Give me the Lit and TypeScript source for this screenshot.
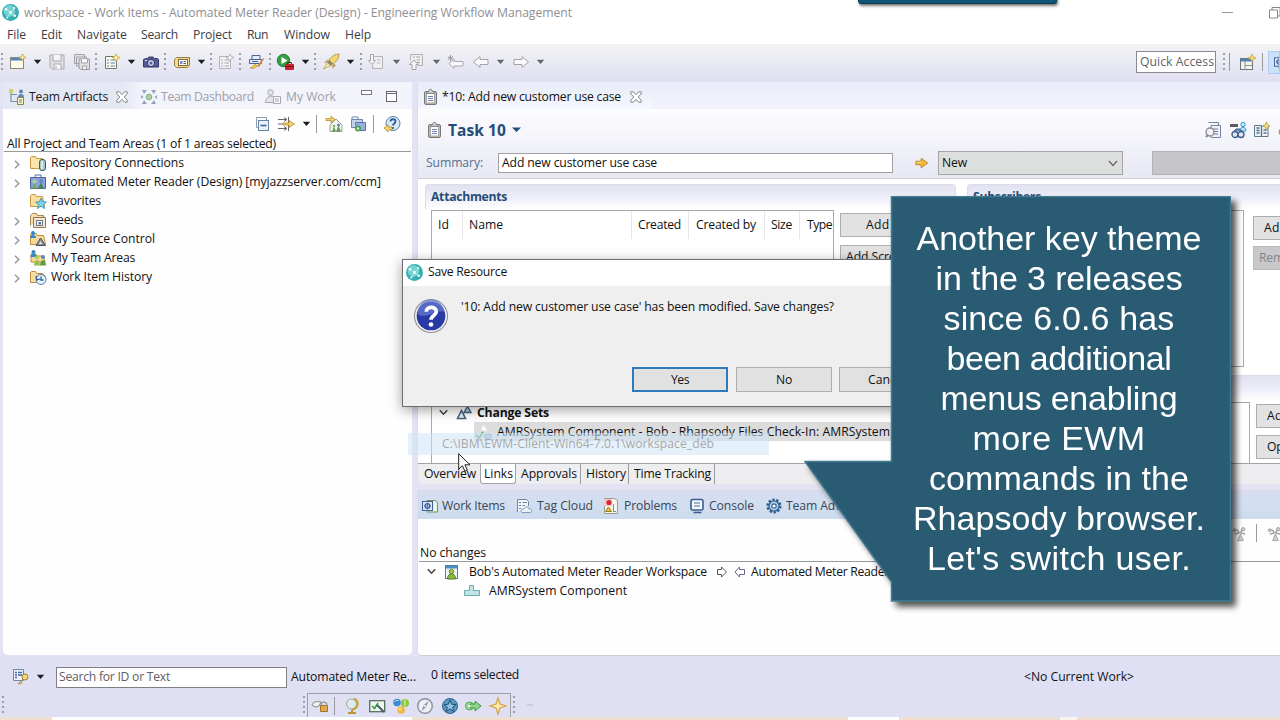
import { LitElement, html, css, svg, TemplateResult, SVGTemplateResult } from "lit";
import { customElement } from "lit/decorators.js";

const UI = '"Open Sans"';
const pen = document.createElement("canvas").getContext("2d")!;

/** A line of text set to a known width by spacing its letters. */
function label(text: string, width: number, cls = "", size = 12.2, weight = 400, family = UI) {
  pen.font = `${weight} ${size}px ${family}`;
  const ls = (width - pen.measureText(text).width) / text.length;
  return html`<span class="t ${cls}" style="letter-spacing:${ls.toFixed(3)}px">${text}</span>`;
}

type Cell = [x: number, w: number, content: unknown];

/** Lays cells out one after the other, each starting at its own x. */
function strip(origin: number, cells: Cell[]) {
  let end = origin;
  return cells.map(([x, w, c]) => {
    const m = x - end;
    end = x + w;
    return html`<div class="cell" style="margin-left:${m}px;width:${w}px">${c}</div>`;
  });
}

const G: Record<string, SVGTemplateResult> = {
  globe: svg`<circle cx="8" cy="8" r="8" fill="#35adb2"/><circle cx="7" cy="6.500" r="5.500" fill="#74d2d0"/><path d="M4 5l4 3 4-4M8 8l-3 5M8 8l4 3" stroke="#b4ecea" stroke-width=".8" fill="none"/><g fill="#f2ffff"><circle cx="3.800" cy="5" r="1.200"/><circle cx="11.500" cy="3.800" r="1"/><circle cx="8" cy="8" r="1.400"/><circle cx="5" cy="12.700" r="1"/><circle cx="12" cy="11" r="1.200"/></g>`,
  win: svg`<rect x=".5" y="3.500" width="13" height="11" fill="#fdfbe8" stroke="#8a8a78"/><rect x="1" y="4" width="12" height="2.500" fill="#4f86c0"/><path d="M12.500 0v7M9 3.500h7" stroke="#d9a53c" stroke-width="2"/><path d="M12.500 1.500v4M10.500 3.500h4" stroke="#fff3b8"/>`,
  save: svg`<path d="M1 1h14v14H3l-2-2z" fill="#e0e0e4" stroke="#a9a9ae"/><path d="M4 1v6h8V1M5 15v-5h7v5M7 12v3" fill="#f6f6f8" stroke="#a9a9ae"/>`,
  saveall: svg`<path d="M.5.500h10v9h-10zM2.500 3h10v9h-10z" fill="#e2e2e6" stroke="#a2a2a8"/><path d="M5 5h10.500v10.500H6.500L5 14z" fill="#e0e0e4" stroke="#9a9aa0"/><path d="M7.500 5v4h6V5M8.500 15v-3h4v3" fill="#f6f6f8" stroke="#a2a2a8"/>`,
  doc: svg`<path d="M1.500 2.500h11v12h-11z" fill="#fbfbf0" stroke="#77766b"/><path d="M3 6h2m1.500 0H11M3 9h2m1.500 0H11M3 12h2m1.500 0H11" stroke="#5d7fa8"/><path d="M12 0l1.200 2.500L16 3.500l-2.800 1.200L12 7.500l-1.200-2.800L8 3.500l2.800-1z" fill="#fff6ae" stroke="#cba83a" stroke-width=".9"/>`,
  docg: svg`<path d="M1.500 2.500h11v12h-11z" fill="#f2f2f5" stroke="#b4b4b8"/><path d="M3 6h2m1.500 0H11M3 9h2m1.500 0H11M3 12h2m1.500 0H11" stroke="#a8a8ae"/><path d="M12 0l1.200 2.500L16 3.500l-2.800 1.200L12 7.500l-1.200-2.800L8 3.500l2.800-1z" fill="#fff" stroke="#ababb0" stroke-width=".9"/>`,
  camera: svg`<path d="M.5 5.500l2-1h2L6 3h4l1.500 1.500h3l1 1V13H.5z" fill="#565c94" stroke="#35356a"/><circle cx="8" cy="9" r="3.600" fill="#c9d2ee" stroke="#32325e"/><circle cx="8" cy="9" r="1.500" fill="#55609a"/><path d="M2 6.500h2" stroke="#ddd"/>`,
  card: svg`<path d="M2.500 3.500h13v8l-2 2h-11l-2-2v-6z" fill="#f2dc94" stroke="#9a7c3a"/><rect x="4.500" y="5.500" width="9" height="6" fill="#fff" stroke="#7b6b3c"/><path d="M9.500 7.500H12M9.500 9.500H12" stroke="#555"/><rect x="6" y="7" width="2.500" height="3" fill="#7a8fb4"/>`,
  brush: svg`<path d="M4 1.500h8v4H4zM1.500 5.500h12v4h-12z" fill="#e4eafa" stroke="#4d628f"/><path d="M4 7.500h6" stroke="#3f64a8"/><path d="M2 14c3 0 3-3 5-4l2 2c-1 2-4 3-7 2z" fill="#f3cb45" stroke="#a8862d" stroke-width=".6"/><path d="M9 12l6-8 1 1-5 8z" fill="#c98c3c"/>`,
  run: svg`<circle cx="6.500" cy="6.500" r="6.200" fill="#37a046" stroke="#1e7a30"/><path d="M4.500 3v7l6-3.500z" fill="#fff"/><rect x="8" y="10" width="9" height="6" rx="1" fill="#c9202e"/><path d="M10.500 10V8.500h4V10M8 12.500h9" stroke="#7d1019" fill="none"/>`,
  rocket: svg`<path d="M17 0c-4 0-7 2-10 6l4 4c4-3 6-6 6-10z" fill="#f7d66e" stroke="#a08339" stroke-width=".8"/><path d="M7 6l4 4-2 2-4-4z" fill="#8a8576"/><path d="M5.500 8.500l3 3-7 3.500z" fill="#f9e59a" stroke="#b08a38" stroke-width=".6"/><path d="M6 5L2 9l3-.5M11 10l-1 5 4-4" fill="#c58e3e"/>`,
  down: svg`<path d="M6.500 2.500h8v12h-10V11" fill="#efeff2" stroke="#b4b4b6"/><path d="M2.500.500h3v6h2L4 10.500.500 6.500h2z" fill="#f6f6f6" stroke="#a4a4a6"/><path d="M9 6h3M9 9h3" stroke="#bbb"/>`,
  up: svg`<path d="M2.500 6V.500h12v11H10" fill="#efeff2" stroke="#b0b0b2"/><path d="M5 3h2m1 0h4M9 6h3M9 8.500h3" stroke="#a8a8aa"/><path d="M4 15.500v-5H1.500L6 6l4.500 4.500H8v5z" fill="#f6f6f6" stroke="#a4a4a6"/>`,
  backstar: svg`<path d="M2 9.500l5-4.500v2.500h9V12H7v2.500z" fill="#f8f8fa" stroke="#a8a8ac"/><path d="M3.500 1v6M.8 2.500l5.400 3M.8 5.500l5.400-3" stroke="#9a9a9e"/>`,
  back: svg`<path d="M.5 8L7 2.500v3h8v5H7v3z" fill="#fafafc" stroke="#a2a2a6"/>`,
  fwd: svg`<path d="M15.500 8L9 2.500v3H1v5h8v3z" fill="#fafafc" stroke="#a2a2a6"/>`,
  persp: svg`<rect x="1.500" y="4.500" width="12" height="11" fill="#f4f4e8" stroke="#6d7680"/><rect x="2" y="5" width="11" height="2.500" fill="#4f86b8"/><path d="M6 7v8.500M6 11.500h7" stroke="#8a949c"/><path d="M13 0l1.200 2.800L17 4l-2.800 1.200L13 8l-1.200-2.800L9 4l2.800-1.200z" fill="#f6d878" stroke="#c39a3a" stroke-width=".7"/>`,
  artifacts: svg`<path d="M2 2v10.500h7M2 5.500h6" stroke="#7a93ae" fill="none" stroke-width="1.200"/><path d="M0 0h4v4H0z" fill="#cbd66a"/><circle cx="12" cy="2.500" r="2" fill="#5f83b8"/><path d="M9 8c0-4 6-4 6 0z" fill="#5f83b8"/><path d="M8.500 8.500h6v7h-6z" fill="#fbf6c8" stroke="#8a8250"/><path d="M10 11h3M10 13h3" stroke="#8a8250"/>`,
  dash: svg`<circle cx="8" cy="8" r="2.800" fill="#a8cfa0" stroke="#86b07f"/><g fill="#96a3b4"><path d="M1 1h5L3 5zM15 1h-5l3 4zM1 15h5l-3-4zM15 15h-5l3-4zM0 6l2.500 2L0 10zM16 6l-2.500 2 2.500 2z"/></g>`,
  person: svg`<circle cx="5.500" cy="3.500" r="2.800" fill="#e4e4ea" stroke="#a8a8b4"/><path d="M.5 13.500C.5 6 9 6 9 9v4.500z" fill="#e4e4ea" stroke="#a8a8b4"/><path d="M8.500 7.500h7v7h-7z" fill="#f8f8fa" stroke="#a8a8b4"/><path d="M10 10h4M10 12h4" stroke="#a8a8b4"/>`,
  collapse: svg`<path d="M1.500 1.500h10v3M1.500 1.500v10h2" fill="none" stroke="#8b9bb0"/><rect x="3.500" y="4.500" width="10" height="10" fill="#e9f1fb" stroke="#6782a5"/><path d="M5.500 9.500h6" stroke="#2f5c98" stroke-width="1.500"/>`,
  filter: svg`<path d="M0 3.500h8M0 12.500h8M0 8h5" stroke="#666"/><path d="M6 1.500l3 2-3 2M6 10.500l3 2-3 2M10.500 1v14" stroke="#666" fill="none"/><path d="M5 7h6V4.500L16.500 8 11 11.500V9H5z" fill="#f5d271" stroke="#b98c2b" stroke-width=".8"/>`,
  home: svg`<path d="M4 9l6-6 6 6v6.500H4z" fill="#f8f4ee" stroke="#9a9488" stroke-width=".9"/><path d="M0 2.500h5V0l4 3.500L5 7V4.500H0z" fill="#f3d06a" stroke="#a8842c" stroke-width=".7"/><path d="M6 15.500l2-5 2 5zM10 15.500l2.500-6 2.500 6z" fill="#5f9a56"/><circle cx="8" cy="10" r="1.300" fill="#7cb568"/><circle cx="12.500" cy="9" r="1.500" fill="#5c84ba"/>`,
  area: svg`<path d="M1.500 3.500h11v8h-11z" fill="#c2d2ea" stroke="#6d86b2"/><path d="M2 1h6v2.500H2z" fill="none" stroke="#6d86b2"/><path d="M5.500 6.500h10v8h-9z" fill="#98b2de" stroke="#5673a6"/><circle cx="8" cy="12.500" r="3" fill="#4aa05a"/><circle cx="8" cy="12.500" r="1.300" fill="#d8f0da"/>`,
  help: svg`<circle cx="9" cy="7.500" r="7" fill="#dce9f7" stroke="#557fae"/><path d="M6.500 5.500C6.500 2.500 11.500 2.500 11.500 5.500c0 2-2.500 2-2.500 4M9 11v2" fill="none" stroke="#2d5f9b" stroke-width="1.800"/><path d="M0 12l4-3.500V11h4v3H4v2z" fill="#f7d46c" stroke="#a8842c" stroke-width=".7"/>`,
  f0: svg`<path d="M.5 13.500v-11l1-1h4l1 2h6v10z" fill="#f9e5ac" stroke="#c69a45"/><rect x="9.500" y="4.500" width="6" height="11" rx="2.500" fill="#a9c6cc" stroke="#34616c"/><path d="M12 6v8" stroke="#e8f6f8" stroke-width="1.500"/>`,
  f1: svg`<path d="M5 3V1h6v2" fill="none" stroke="#5a6fa8"/><path d="M.5 3.500h15v11H.5z" fill="#8ba3d8" stroke="#4d62a0"/><path d="M2 14.500l2.500-6 2.500 6z" fill="#6dae5c"/><circle cx="4.500" cy="7.500" r="2" fill="#a7d58e"/><path d="M8 14.500l3-6 3 6z" fill="#3d8a46"/><circle cx="11" cy="7" r="2" fill="#5e86cc"/>`,
  f2: svg`<path d="M.5 13.500v-11l1-1h4l1 2h6l2 10z" fill="#f9e0a0" stroke="#c69a45"/><path d="M11 5l1.600 3.700 3.900.3-3 2.500 1 4-3.500-2.200-3.500 2.200 1-4-3-2.500 3.900-.3z" fill="#7fd3e6" stroke="#2d8fb5" stroke-width=".8"/>`,
  f3: svg`<path d="M.5 13.500v-10l2-2h4l1 2h6v2" fill="#f6ddb0" stroke="#a88652"/><path d="M3.500 5.500h12v10h-12z" fill="#f0e7d8" stroke="#96774c"/><rect x="6.500" y="8.500" width="6" height="5" fill="#fff" stroke="#777"/><rect x="8.500" y="10" width="2.500" height="2.500" fill="#4a71ad"/>`,
  f4: svg`<path d="M.5 13.500v-10l1-1h5l1 2h6l2 9z" fill="#f7d898" stroke="#c08f3c"/><circle cx="3" cy="2" r="2" fill="#2f86c6"/><path d="M0 7c0-4 6-4 6 0z" fill="#2f86c6"/><path d="M6 14.500L10.500 7l5 7.500z" fill="#8a8f9c" stroke="#4d525e"/><path d="M9 13l1.500-3 1.500 3z" fill="#eee"/>`,
  f5: svg`<path d="M1 12V4h5l1 2h6l2 6z" fill="#f7d898" stroke="#c08f3c"/><circle cx="3.500" cy="2" r="2" fill="#2f86c6"/><path d="M.5 7c0-4 6-4 6 0z" fill="#2f86c6"/><path d="M4 15.500c0-7 6-7 6 0z" fill="#93c04a"/><circle cx="7" cy="7.500" r="2" fill="#a8cf62"/><path d="M10 15.500c0-7 6-7 6 0z" fill="#62993a"/><circle cx="13" cy="7" r="2" fill="#5b85c0"/>`,
  f6: svg`<path d="M.5 13.500v-10l1-1h4l1 2h6l3 3-4 6z" fill="#f7dea0" stroke="#b98b3a"/><circle cx="11" cy="10.500" r="5" fill="#e6f1fa" stroke="#4a7dad"/><path d="M11 7.500v3.500h2.500M6 7l1 4 3-1" stroke="#2f5f98" fill="none" stroke-width="1.300"/>`,
  clip: svg`<rect x="1.500" y="2.500" width="12" height="13" rx="1.500" fill="#d3bc98" stroke="#77777c"/><rect x="3.500" y="4.500" width="8" height="9.500" fill="#fff" stroke="#9a9a9e" stroke-width=".8"/><path d="M5 7.500h5M5 9.500h5M5 11.500h5" stroke="#6c7fb0"/><path d="M4 2.500h1.500c0-3 4-3 4 0H11v2H4z" fill="#c8c8cc" stroke="#77777c" stroke-width=".8"/>`,
  h0: svg`<path d="M3.500.500h10v3M6 3.500h9.500v12H6z" fill="#edf0f8" stroke="#7686a6"/><path d="M8 7h5M8 9.500h5M8 12h5" stroke="#6e7ea0"/><circle cx="5" cy="10" r="4" fill="#f3f3f5" stroke="#8a8a90" stroke-width="1.300"/><path d="M3 13l-2 2" stroke="#8a8a90" stroke-width="2"/>`,
  h1: svg`<path d="M0 3.500h8" stroke="#5c5c66" stroke-width="3"/><circle cx="13" cy="2.500" r="2.200" fill="#bfe6fa" stroke="#3b9ad0"/><path d="M10 9c0-5 6-5 6 0z" fill="#bfe6fa" stroke="#3b9ad0"/><circle cx="5" cy="12.500" r="3" fill="#dbe5f2" stroke="#3b5b88" stroke-width="1.300"/><circle cx="11" cy="12.500" r="3" fill="#dbe5f2" stroke="#3b5b88" stroke-width="1.300"/><path d="M4 9l2-2h4l2 2" fill="#6b8cb8" stroke="#3b5b88"/>`,
  h2: svg`<path d="M.5 3.500h7l1 1 1-1H14v11H.5z" fill="#f0f3f6" stroke="#5e7a8c"/><path d="M2.500 6h3M2.500 8.500h3M2.500 11h3M9.500 8h3M9.500 11h3M7.500 4v10" stroke="#4c7494" stroke-width="1.300"/><path d="M12.500 0l1.200 2.800L16 4l-2.300 1.200L12.500 8l-1.200-2.800L9 4l2.300-1.200z" fill="#f6e178" stroke="#ab8a2a" stroke-width=".7"/>`,
  arrowr: svg`<path d="M1 5.500h6V2l7.500 5.500L7 13V9.500H1z" fill="#f2b63a" stroke="#b98422"/><path d="M2 6.800h6" stroke="#fde6a0"/>`,
  question: svg`<circle cx="16" cy="16" r="15.500" fill="#f4f4f6" stroke="#8e8e94"/><circle cx="16" cy="16" r="13.500" fill="#2a3aa4"/><path d="M3.500 14A12.500 12.500 0 0 1 28.500 12C22 9 10 20 3.500 14z" fill="#6479d0" opacity=".75"/><path d="M11.500 12C11.500 6.500 21 6.500 21 12c0 3.500-5 3.500-5 7.500" fill="none" stroke="#fff" stroke-width="3.400"/><circle cx="16" cy="24" r="2.200" fill="#fff"/>`,
  change: svg`<path d="M1.500 13.500l4-8 4 8z" fill="#e7edf4" stroke="#456184" stroke-width="1.600"/><path d="M8 7.500l3.500-6 3.500 6z" fill="#b5c4da" stroke="#456184" stroke-width="1.400"/>`,
  check: svg`<path d="M0 11l3 3 4-6" fill="none" stroke="#5fa56c" stroke-width="1.500"/><path d="M5 6l3-5 3 6" fill="#fff" stroke="#eeeef0"/><path d="M9 10.500h6v3.500H9z" fill="#b6cce8" stroke="#7f9cc8"/>`,
  wi: svg`<path d="M5 2.500h8l2.500 2V14H5z" fill="#eef4e0" stroke="#6f9460"/><rect x=".5" y="3.500" width="10" height="9" fill="#dde8f8" stroke="#3d5f98"/><circle cx="5.500" cy="8" r="2.400" fill="none" stroke="#3d5f98" stroke-width="1.300"/><path d="M5.500 4.500v7M2 8h7" stroke="#3d5f98" stroke-width=".7"/>`,
  tag: svg`<path d="M1.500 14V1.500h9l2 2V8" fill="#f4f6fa" stroke="#6e85a8"/><path d="M3 4.500h2M6.500 4.500H11M3 7.500h2M6.500 7.500H9M3 10.500h2" stroke="#6e85a8"/><path d="M6 14.500c-2-2 0-4 2-3.500 1-3 5-2.500 5 0 3 0 3.500 3 1.500 3.500z" fill="#eaf2fc" stroke="#7c9cc4"/>`,
  prob: svg`<path d="M1.500.500h10l3 2v13h-13z" fill="#f7f5ee" stroke="#9a9a90"/><rect x="1" y="1" width="8" height="7" fill="#f3c7cb"/><circle cx="6" cy="4.500" r="2.600" fill="#d42a36"/><path d="M2.500 13.500L5.500 9l3 4.500z" fill="#eec137" stroke="#9a7a1c"/><path d="M10.500 6v7M13 13.500h-3" stroke="#888"/>`,
  cons: svg`<rect x="1" y="1.500" width="12" height="10.500" rx="1.500" fill="#f4f8fd" stroke="#3a5d92" stroke-width="1.600"/><path d="M4 5h6M4 8h6" stroke="#4a6ea6" stroke-width="1.200"/><path d="M3.500 14.500h8" stroke="#3a5d92" stroke-width="1.600"/>`,
  gear: svg`<circle cx="8" cy="8" r="6.300" fill="#a9c6e6" stroke="#33608f" stroke-width="2.600" stroke-dasharray="2.300 1.600"/><circle cx="8" cy="8" r="5" fill="#b9d2ec" stroke="#33608f" stroke-width="1.200"/><circle cx="8" cy="8" r="2.200" fill="#fff" stroke="#33608f" stroke-width="1.200"/>`,
  space: svg`<rect x="1.500" y="1.500" width="12" height="13" fill="#edf3fb" stroke="#55809e"/><rect x="2" y="2" width="11" height="2.500" fill="#4a8fc4"/><circle cx="7.500" cy="7.500" r="2.200" fill="#a8c948" stroke="#5e8a26"/><path d="M3.500 15c0-7 8-7 8 0z" fill="#8dba3c" stroke="#4f7d22"/>`,
  comp: svg`<path d="M5.500 2.500h4v5h6v5H.5v-5h5z" fill="#bfe5e2" stroke="#69aeb0"/>`,
  oright: svg`<path d="M1.500 3.500h4V1l5 5-5 5V8.500h-4z" fill="#fff" stroke="#555"/>`,
  oleft: svg`<path d="M10.500 3.500h-5V1l-4.500 5 4.500 5V8.500h5z" fill="#fff" stroke="#666688"/>`,
  listkey: svg`<path d="M.5.500h10v11H.5z" fill="#eef3fb" stroke="#7187ac"/><path d="M2 3.500h2M5 3.500h4M2 6h2M5 6h4M2 8.500h2" stroke="#4668a4" stroke-width="1.300"/><circle cx="12" cy="8" r="3" fill="#f2d77c" stroke="#9d803a"/><path d="M10 10l-5 5 2-.5 1 .5 1-3z" fill="#f2d77c" stroke="#9d803a" stroke-width=".7"/>`,
  b0: svg`<path d="M0 7c1-3 4-4 9-3l-2 4-4 1z" fill="#f2f2f2" stroke="#888"/><path d="M8.500 7.500h7v6h-7z" fill="#e2a93e" stroke="#9a7630"/><path d="M9 7c0-4 6-4 6 1" fill="none" stroke="#999" stroke-width="1.500"/>`,
  b1: svg`<circle cx="7.500" cy="6" r="5" fill="#d9ecf4" stroke="#a4a48c"/><path d="M10 .5c6 3 4 10-2 11.500" fill="none" stroke="#c9a43c" stroke-width="2"/><path d="M4 15h8M8 12v3" stroke="#b5993a" stroke-width="2"/>`,
  b2: svg`<rect x=".7" y="2.700" width="15" height="11" fill="#f2f8f0" stroke="#4f6f5e" stroke-width="1.300"/><path d="M3 8l2.500 2.500L9 5" fill="none" stroke="#2d9a50" stroke-width="1.500"/><path d="M8 7l7 7" stroke="#4a5a66" stroke-width="2"/>`,
  b3: svg`<circle cx="4" cy="4.500" r="3.800" fill="#3c8ad0"/><path d="M1.500 4a3 3 0 0 1 4-1.500" stroke="#cde6fb" fill="none"/><circle cx="12" cy="5" r="4" fill="#8ac640"/><path d="M12 1.500v7" stroke="#e2f5c0"/><circle cx="8" cy="12" r="3.800" fill="#f0b838"/><circle cx="7" cy="11" r="1.500" fill="#fde09a"/>`,
  b4: svg`<circle cx="8" cy="8" r="7.300" fill="#eceff4" stroke="#8d8f9a" stroke-width="1.400"/><path d="M11.500 3L9 9l-4.500 4L7 7z" fill="#7b8cae"/><circle cx="8" cy="8" r="1" fill="#fff"/>`,
  b5: svg`<circle cx="8" cy="8" r="7.500" fill="#5a9ac4" stroke="#2c5f86"/><path d="M8 2l1.700 4.300 4.300.2-3.400 2.800L12 13.500 8 11l-4 2.500 1.400-4.200L2 6.500l4.300-.2z" fill="#8fc4e2" stroke="#1f4f78"/>`,
  b6: svg`<circle cx="4.500" cy="8" r="4" fill="#9fdc98" stroke="#4ea64c"/><path d="M5 6h5V3l6 5-6 5v-3H5z" fill="#8ed387" stroke="#3f9a42"/><circle cx="4.500" cy="8" r="1.300" fill="#effbee"/>`,
  b7: svg`<path d="M8 0l2 6 6 2-6 2-2 6-2-6-6-2 6-2z" fill="#fbe9ae" stroke="#d2a340" stroke-width="1.200"/>`,
  deliver: svg`<g fill="#d0d0d2" stroke="#a0a0a4"><path d="M6 15l3-7 3 7z"/><path d="M1 4h5l2 3M12 1l-3 6M9 7l5 1M3 8l5-1" fill="none" stroke-width="1.500"/><circle cx="3" cy="4" r="1.500"/><circle cx="12" cy="3" r="1.800"/></g>`,
  cursor: svg`<path d="M.7.700v15.500l3.700-3.500 2.500 5.600 2.500-1.100-2.500-5.400h5.100z" fill="#fff" stroke="#222" stroke-width="1"/>`,
};

function icon(name: string, w = 16, h = w, box = "0 0 17 16") {
  return html`<svg class="i" width=${w} height=${h} viewBox=${box}>${G[name]}</svg>`;
}
const ic = (x: number, n: string): Cell => [x, 17, icon(n, 17, 16)];
const drop = (x: number, fill = "#1d1d22"): Cell => [x - 4, 9, html`<svg class="i" width="9" height="6" viewBox="0 0 9 6"><path d="M.8.800h7.400L4.500 5z" fill=${fill}/></svg>`];
const dropg = (x: number): Cell => drop(x, "#66666e");
const grip = (x: number): Cell => [x, 2, html`<i class="grip"></i>`];
const rule = (x: number): Cell => [x, 1, html`<i class="rule"></i>`];
const chev = (open: boolean) => open
  ? html`<svg class="i" width="9" height="7" viewBox="0 0 9 7"><path d="M.8 1.200l3.700 4 3.700-4" fill="none" stroke="#444" stroke-width="1.500"/></svg>`
  : html`<svg class="i chev" width="6" height="9" viewBox="0 0 6 9"><path d="M1 .8l3.800 3.700L1 8.200" fill="none" stroke="#999" stroke-width="1.500"/></svg>`;
const close = () => html`<svg class="i" width="12" height="12" viewBox="0 0 12 12"><path d="M.8.800h2.600L6 3.700 8.600.800h2.600v2L8.200 6l3 3.200v2H8.600L6 8.300l-2.600 2.900H.8v-2l3-3.200-3-3.200z" fill="#fff" stroke="#77777d" stroke-width=".9"/></svg>`;

const TREE: [string, string, number, boolean][] = [
  ["f0", "Repository Connections", 133, true],
  ["f1", "Automated Meter Reader (Design) [myjazzserver.com/ccm]", 330, true],
  ["f2", "Favorites", 50, false],
  ["f3", "Feeds", 32, true],
  ["f4", "My Source Control", 104, true],
  ["f5", "My Team Areas", 84, true],
  ["f6", "Work Item History", 101, true],
];

const NOTE: [string, number][] = [
  ["Another key theme", 285], ["in the 3 releases", 247], ["since 6.0.6 has", 231],
  ["been additional", 225], ["menus enabling", 237], ["more EWM", 173],
  ["commands in the", 260], ["Rhapsody browser.", 292], ["Let's switch user.", 264],
];

@customElement("app-root")
export class AppRoot extends LitElement {
  static styles = css`
    :host { display: block; position: relative; width: 1280px; height: 720px; overflow: hidden; background: #e0e0f4; font: 12.2px/16px "Open Sans", sans-serif; color: #111; }
    * { box-sizing: border-box; }
    .app { display: grid; grid-template-rows: 25px 19px 38px 575px 63px; height: 720px; }
    .t { display: inline-block; white-space: pre; }
    .i { display: block; overflow: visible; flex: none; }
    .row { display: flex; align-items: center; }
    .cell { flex: none; display: flex; align-items: center; }
    .title { background: #fff; color: #8f8f93; }
    .menu { background: #fff; color: #3d3d42; }
    .tools { background: linear-gradient(#f3f3f6, #e9e9f4 50%, #dfdff1); border-top: 1px solid #f0eef0; padding-bottom: 3px; }
    .grip { display: block; width: 2px; height: 18px; background: repeating-linear-gradient(#9d9da8 0 2px, transparent 2px 5px); }
    .rule { display: block; width: 1px; height: 18px; background: #9898a0; }
    .quick { width: 80px; height: 22px; border: 1px solid #88888e; background: #fff; display: flex; align-items: center; padding-left: 3px; color: #606066; }
    .sel { width: 16px; height: 23px; background: #cce2fb; border: 1px solid #a9cdf4; display: flex; align-items: center; padding-left: 5px; overflow: hidden; }
    .main { display: grid; grid-template-columns: 409px 1fr; column-gap: 5px; padding-left: 3px; background: #e4e3f4; }
    .left { background: #fefefe; display: grid; grid-template-rows: 27px 27px 17px 1fr; height: 573px; border-radius: 0 0 5px 5px; }
    .tabs { background: linear-gradient(90deg, #e4e8f3 0 120px, #f3f3fc 138px); color: #a0a0a8; padding-top: 2px; }
    .ltools { padding-top: 2px; }
    .head { border-bottom: 1px solid #9a9a9e; margin: 0 1px; height: 16px; }
    .tree { padding-top: 0; }
    .leaf { height: 19px; }
    .chev { margin-top: 3px; }
    .right { display: grid; grid-template-rows: 408px 1fr; height: 574px; }
    .editor { display: grid; grid-template-rows: 27px 70px 284px 21px; height: 402px; background: #fff; border-radius: 0 0 6px 6px; border-left: 1px solid #dcdcf0; overflow: hidden; }
    .etabs { background: linear-gradient(#ecebf8, #edeffa 40%, #f3f2fb); padding-top: 2px; }
    .etab { display: flex; align-items: center; height: 25px; width: 232px; margin-left: 3px; background: linear-gradient(#e8ecf7, #f6f8fe); border-radius: 0 10px 0 0; }
    .form { background: linear-gradient(#fdfdff, #f0f0f8 60%, #e6e8f2); border-bottom: 1px solid #cfcfd6; }
    .trow { height: 41px; padding-top: 1px; }
    .srow { height: 26px; }
    .blue { color: #244c78; }
    .slate { color: #53708e; }
    .field { background: #fff; border: 1px solid #a0a0a6; height: 20px; display: flex; align-items: center; padding-left: 3px; width: 100%; }
    .combo { background: #dddfde; border: 1px solid #a4a4a6; height: 24px; display: flex; align-items: center; justify-content: space-between; padding: 0 4px 0 3px; width: 100%; }
    .gray { background: #c6c6c9; border: 1px solid #b4b4b7; height: 24px; width: 100%; }
    .body { display: grid; grid-template-columns: 531px 1fr; column-gap: 11px; padding: 5px 0 0 7px; overflow: hidden; }
    .sec { display: grid; grid-template-rows: 25px 166px 26px 1fr; height: 279px; }
    .bar { background: linear-gradient(#e2e2f0, #f0f0fa 60%, #fff); border: 1px solid #dcdcea; border-bottom: 0; border-radius: 4px 4px 0 0; display: flex; align-items: center; padding-left: 5px; }
    .split { display: flex; gap: 6px; align-items: flex-start; padding: 1px 0 0 6px; }
    .split.r { gap: 9px; }
    .split.r2 { gap: 6px; }
    .box { border: 1px solid #a8a8ae; background: #fff; height: 157px; flex: none; }
    .w403 { width: 403px; } .w272 { width: 271px; } .w278 { width: 277px; } .w520 { width: 520px; }
    .low { height: 62px; border-bottom: 0; }
    .cols { height: 28px; background: linear-gradient(90deg, transparent 30px, #e6e6ea 30px 31px, transparent 31px 199px, #e6e6ea 199px 200px, transparent 200px 256px, #e6e6ea 256px 257px, transparent 257px 332px, #e6e6ea 332px 333px, transparent 333px 367px, #e6e6ea 367px 368px, transparent 368px); }
    .btns { display: flex; flex-direction: column; gap: 8px; padding-top: 3px; }
    .btns.r { padding-top: 6px; gap: 6px; }
    .btns.l { padding-top: 2px; gap: 7px; }
    .btn { width: 110px; height: 24px; background: #e2e2e3; border: 1px solid #adadb0; display: flex; align-items: center; }
    .btn.off { background: #c9c9cb; border-color: #b9b9bb; color: #85858a; }
    .pad26 { padding-left: 25px; } .pad5 { padding-left: 5px; } .pad11 { padding-left: 10px; }
    .csets { height: 19px; } .picked { height: 19px; margin-left: 42px; background: #dcdcdd; }
    .pages { background: #eeeef0; border-top: 1px solid #a2a2a8; display: flex; }
    .pg { height: 20px; width: 100%; display: flex; align-items: center; border-right: 1px solid #9a9aa0; padding-left: 5px; }
    .pg.first { border-right: 0; padding-left: 6px; }
    .pg.on { background: #fff; border-radius: 0 0 3px 3px; border: 1px solid #a2a2a8; border-top: 0; padding-left: 3px; }
    .views { background: #fefefe; border-left: 1px solid #dcdcf0; display: grid; grid-template-rows: 29px 43px 19px 19px 1fr; border-bottom: 1px solid #ccccc9; border-radius: 0 0 0 5px; }
    .vtabs { background: linear-gradient(#d9dcf0, #d2dff0 45%, #cddbee); color: #3c4656; padding-top: 3px; }
    .nochg { border-bottom: 1px solid #9a9a9e; margin-left: 1px; align-items: flex-end; }
    .lift { padding-bottom: 19px; }
    .foot { display: grid; grid-template-rows: 36px 24px 3px; }
    .foot .row.a { padding-top: 4px; }
    .find { width: 231px; height: 21px; background: #fff; border: 1px solid #7f7f85; display: flex; align-items: center; padding-left: 2px; color: #606064; }
    .trim { height: 24px; width: 204px; border: 1px solid #a0a0a6; border-bottom: 0; display: flex; align-items: center; }
    .task { background: linear-gradient(90deg, #efe0d2 52px, #fff 52px 412px, #efe0d2 412px 848px, #fff 848px 899px, #efe0d2 899px 1060px, #faf4ee 1060px 1077px, #efe0d2 1077px); }
    .ghost { position: absolute; left: 408px; top: 433px; width: 361px; height: 22px; background: rgba(205, 229, 246, .55); color: rgba(150, 140, 135, .75); padding: 3px 0 0 34px; }
    .dialog { position: absolute; left: 402px; top: 259px; width: 540px; height: 148px; background: #efefef; border: 1px solid #6e6e72; box-shadow: 0 3px 12px rgba(0,0,0,.38); display: grid; grid-template-rows: 26px 80px 1fr; }
    .dt { background: #fff; padding-bottom: 2px; }
    .dm { align-items: flex-start; padding-top: 13px; }
    .dbs { padding-bottom: 13px; }
    .db { height: 25px; width: 96px; background: #e1e1e1; border: 1px solid #adadad; display: flex; align-items: center; justify-content: center; }
    .db.def { border: 2px solid #2f79bd; }
    .tip { position: absolute; left: 858px; top: -8px; width: 199px; height: 12px; background: #0d5679; border: 1px solid #0b3850; border-radius: 3px; box-shadow: 1px 2px 3px rgba(0,0,0,.55); }
    .callout { position: absolute; left: 804px; top: 196px; width: 427px; height: 406px; filter: drop-shadow(5px 5px 3px rgba(0,0,0,.68)); }
    .shape { position: absolute; left: 0; top: 0; display: block; }
    .note { position: relative; margin-left: 85px; width: 340px; padding-top: 22px; display: flex; flex-direction: column; align-items: center; color: #fff; }
    .line { height: 40px; font: 34px/40px "Liberation Sans", sans-serif; }
    .cursor { position: absolute; left: 458px; top: 453px; }
    .bold { font-weight: 700; }
    .big { font-size: 15.5px; line-height: 20px; font-weight: 700; }
    .dark { color: #1c1c20; }
    .up6 { margin-top: -8px; }
    .raise { padding-bottom: 5px; }
  `;

  private toolbar(): TemplateResult {
    return html`<div class="row tools">${strip(0, [
      grip(1), ic(10, "win"), drop(37), ic(49, "save"), ic(74, "saveall"), grip(95), ic(104, "doc"), drop(131),
      ic(143, "camera"), grip(164), ic(174, "card"), drop(201), grip(210), ic(218, "docg"), grip(239), ic(248, "brush"),
      grip(269), ic(277, "run"), drop(305), grip(314), ic(322, "rocket"), drop(350), grip(360), ic(368, "down"), dropg(396),
      ic(408, "up"), dropg(436), ic(447, "backstar"), ic(473, "back"), dropg(500), ic(513, "fwd"), dropg(540),
      [1136, 80, html`<div class="quick">${label("Quick Access", 74)}</div>`],
      grip(1223), rule(1229), ic(1239, "persp"), rule(1262), [1268, 12, html`<div class="sel">${icon("wi")}</div>`],
    ])}</div>`;
  }

  private leftPane(): TemplateResult {
    return html`<section class="left">
      <div class="row tabs">${strip(3, [
        ic(9, "artifacts"), [29, 80, label("Team Artifacts", 79, "dark")], [116, 12, close()],
        ic(141, "dash"), [161, 94, label("Team Dashboard", 93)], ic(265, "person"), [286, 52, label("My Work", 50)],
        [361, 12, html`<svg class="i up6" width="11" height="5"><rect x=".5" y=".5" width="10" height="4" fill="#fff" stroke="#77777c"/></svg>`],
        [386, 12, html`<svg class="i" width="11" height="11"><rect x=".5" y=".5" width="10" height="10" fill="#fff" stroke="#66666c"/><path d="M0 2.500h11" stroke="#66666c"/></svg>`],
      ])}</div>
      <div class="row ltools">${strip(3, [ic(255, "collapse"), ic(278, "filter"), drop(306), rule(316), ic(326, "home"), ic(350, "area"), rule(373), ic(384, "help")])}</div>
      <div class="row head">${strip(4, [[7, 270, label("All Project and Team Areas (1 of 1 areas selected)", 269)]])}</div>
      <div class="tree">${TREE.map(([g, s, w, more]) => html`<div class="row leaf">${strip(3, [
        [14, 8, more ? chev(false) : ""], ic(30, g), [51, w, label(s, w)],
      ])}</div>`)}</div>
    </section>`;
  }

  private editor(): TemplateResult {
    return html`<section class="editor">
      <div class="etabs"><div class="etab">${strip(421, [ic(423, "clip"), [442, 180, label("*10: Add new customer use case", 179)], [630, 12, close()]])}</div></div>
      <div class="form">
        <div class="row trow">${strip(418, [
          ic(427, "clip"), [448, 58, label("Task 10", 58, "big blue", 15.5, 700)],
          [512, 9, html`<svg class="i" width="9" height="6" viewBox="0 0 9 6"><path d="M0 .5h9L4.500 5z" fill="#244c78"/></svg>`],
          ic(1205, "h0"), ic(1230, "h1"), ic(1254, "h2"),
          [1278, 8, html`<svg class="i" width="8" height="8"><circle cx="4" cy="6" r="3" fill="#f6e178" stroke="#ab8a2a"/></svg>`],
        ])}</div>
        <div class="row srow">${strip(418, [
          [426, 57, label("Summary:", 57, "slate")],
          [498, 395, html`<div class="field">${label("Add new customer use case", 155)}</div>`],
          [915, 15, icon("arrowr", 15)],
          [938, 185, html`<div class="combo">${label("New", 25)}<svg class="i" width="10" height="7"><path d="M1 1l4 4.500L9 1" fill="none" stroke="#666" stroke-width="1.200"/></svg></div>`],
          [1152, 140, html`<div class="gray"></div>`],
        ])}</div>
      </div>
      <div class="body">
        <div class="sec">
          <div class="bar">${label("Attachments", 76, "bold blue", 12.2, 700)}</div>
          <div class="split">
            <div class="box w403"><div class="row cols">${strip(432, [
              [438, 12, label("Id", 11)], [469, 35, label("Name", 34)], [638, 44, label("Created", 43)],
              [696, 61, label("Created by", 60)], [771, 22, label("Size", 21)], [807, 26, label("Type", 25)],
            ])}</div></div>
            <div class="btns"><div class="btn pad26">${label("Add File...", 58)}</div><div class="btn pad5">${label("Add Screenshot...", 98)}</div></div>
          </div>
          <div class="bar">${label("Links", 33, "bold blue", 12.2, 700)}</div>
          <div class="split"><div class="box w520 low">
            <div class="row csets">${strip(432, [[439, 9, chev(true)], ic(456, "change"), [477, 73, label("Change Sets", 72, "bold", 12.2, 700)]])}</div>
            <div class="row picked">${strip(474, [ic(476, "check"), [497, 393, label("AMRSystem Component - Bob - Rhapsody Files Check-In: AMRSystem", 393)]])}</div>
          </div></div>
        </div>
        <div class="sec">
          <div class="bar">${label("Subscribers", 68, "bold blue", 12.2, 700)}</div>
          <div class="split r"><div class="box w272"></div><div class="btns r"><div class="btn pad11">${label("Add...", 34)}</div><div class="btn off pad5">${label("Remove", 45)}</div></div></div>
          <div class="bar"></div>
          <div class="split r2"><div class="box w278 low"></div><div class="btns l"><div class="btn pad11">${label("Add...", 34)}</div><div class="btn pad11">${label("Open", 30)}</div></div></div>
        </div>
      </div>
      <div class="pages">${strip(418, [
        [418, 62, html`<div class="pg first">${label("Overview", 52)}</div>`],
        [480, 36, html`<div class="pg on">${label("Links", 29)}</div>`],
        [516, 65, html`<div class="pg">${label("Approvals", 56)}</div>`],
        [581, 48, html`<div class="pg">${label("History", 40)}</div>`],
        [629, 86, html`<div class="pg">${label("Time Tracking", 77)}</div>`],
      ])}</div>
    </section>`;
  }

  private views(): TemplateResult {
    return html`<section class="views">
      <div class="row vtabs">${strip(418, [
        ic(422, "wi"), [442, 64, label("Work Items", 63)], ic(516, "tag"), [537, 57, label("Tag Cloud", 56)],
        ic(603, "prob"), [624, 53, label("Problems", 53)], ic(690, "cons"), [709, 46, label("Console", 45)],
        ic(766, "gear"), [786, 80, label("Team Advisor", 76)],
      ])}</div>
      <div class="row nochg">${strip(419, [
        [420, 67, label("No changes", 66)],
        [1232, 17, html`<div class="lift">${icon("deliver")}</div>`],
        [1256, 1, html`<div class="lift"><i class="rule"></i></div>`],
        [1267, 17, html`<div class="lift">${icon("deliver")}</div>`],
      ])}</div>
      <div class="row">${strip(418, [
        [427, 9, chev(true)], ic(444, "space"), [469, 239, label("Bob's Automated Meter Reader Workspace", 238)],
        [716, 12, icon("oright", 12, 12, "0 0 12 12")], [734, 12, icon("oleft", 12, 12, "0 0 12 12")],
        [751, 180, label("Automated Meter Reader Stream", 180)],
      ])}</div>
      <div class="row">${strip(418, [ic(464, "comp"), [489, 139, label("AMRSystem Component", 138)]])}</div>
    </section>`;
  }

  render() {
    return html`<div class="app">
      <div class="row title">${strip(0, [
        [2, 17, icon("globe", 17, 17, "0 0 16 16")],
        [24, 549, label("workspace - Work Items - Automated Meter Reader (Design) - Engineering Workflow Management", 548)],
        [1222, 11, html`<svg class="i" width="11" height="2"><path d="M0 .5h11" stroke="#999"/></svg>`],
        [1269, 11, html`<svg class="i" width="12" height="12"><path d="M3 3V.5h8V9H9M.5 3h8v8h-8z" fill="none" stroke="#888"/></svg>`],
      ])}</div>
      <div class="row menu">${strip(0, [
        [7, 20, label("File", 19)], [41, 21, label("Edit", 21)], [77, 50, label("Navigate", 50)], [141, 37, label("Search", 37)],
        [193, 39, label("Project", 39)], [247, 22, label("Run", 21)], [284, 46, label("Window", 46)], [345, 27, label("Help", 26)],
      ])}</div>
      ${this.toolbar()}
      <div class="main">${this.leftPane()}<div class="right">${this.editor()}${this.views()}</div></div>
      <div class="foot">
        <div class="row a">${strip(0, [
          [13, 17, icon("listkey", 17, 16)], drop(40), [56, 231, html`<div class="find">${label("Search for ID or Text", 111)}</div>`],
          [291, 126, label("Automated Meter Re...", 125)], [431, 89, html`<div class="raise">${label("0 items selected", 88)}</div>`],
          [1024, 112, label("<No Current Work>", 110)],
        ])}</div>
        <div class="row">${strip(0, [
          grip(2), grip(303), [307, 204, html`<div class="trim">${strip(308, [
            [312, 17, icon("b0", 17, 16)], rule(334), ...[352, 377, 401, 425, 450, 473, 498].map((x, k): Cell => [x - 8, 17, icon("b" + (k + 1), 17, 16)]),
          ])}</div>`], grip(513), [527, 6, html`<svg class="i" width="6" height="2"><path d="M0 1h6" stroke="#bbb"/></svg>`],
        ])}</div>
        <div class="task"></div>
      </div>
    </div>
    <div class="ghost">${label("C:\\IBM\\EWM-Client-Win64-7.0.1\\workspace_deb", 272)}</div>
    <div class="dialog">
      <div class="row dt">${strip(403, [[406, 17, icon("globe", 17, 17, "0 0 16 16")], [428, 80, label("Save Resource", 79)]])}</div>
      <div class="row dm">${strip(403, [[414, 34, icon("question", 34, 34, "0 0 32 32")], [461, 374, label("'10: Add new customer use case' has been modified. Save changes?", 373)]])}</div>
      <div class="row dbs">${strip(403, [
        [632, 96, html`<div class="db def">${label("Yes", 18)}</div>`], [736, 96, html`<div class="db">${label("No", 16)}</div>`],
        [839, 96, html`<div class="db">${label("Cancel", 38)}</div>`],
      ])}</div>
    </div>
    <div class="cursor">${icon("cursor", 13, 19, "0 0 13 19")}</div>
    <div class="tip"></div>
    <div class="callout">
      <svg class="shape" width="427" height="406"><path d="M87.500.500h339v404.500h-339V386L1 265.500h86.500z" fill="#295b73" stroke="#417c92" stroke-width="1.500"/></svg>
      <div class="note">${NOTE.map(([s, w]) => html`<div class="line">${label(s, w, "", 34, 400, '"Liberation Sans"')}</div>`)}</div>
    </div>`;
  }
}
